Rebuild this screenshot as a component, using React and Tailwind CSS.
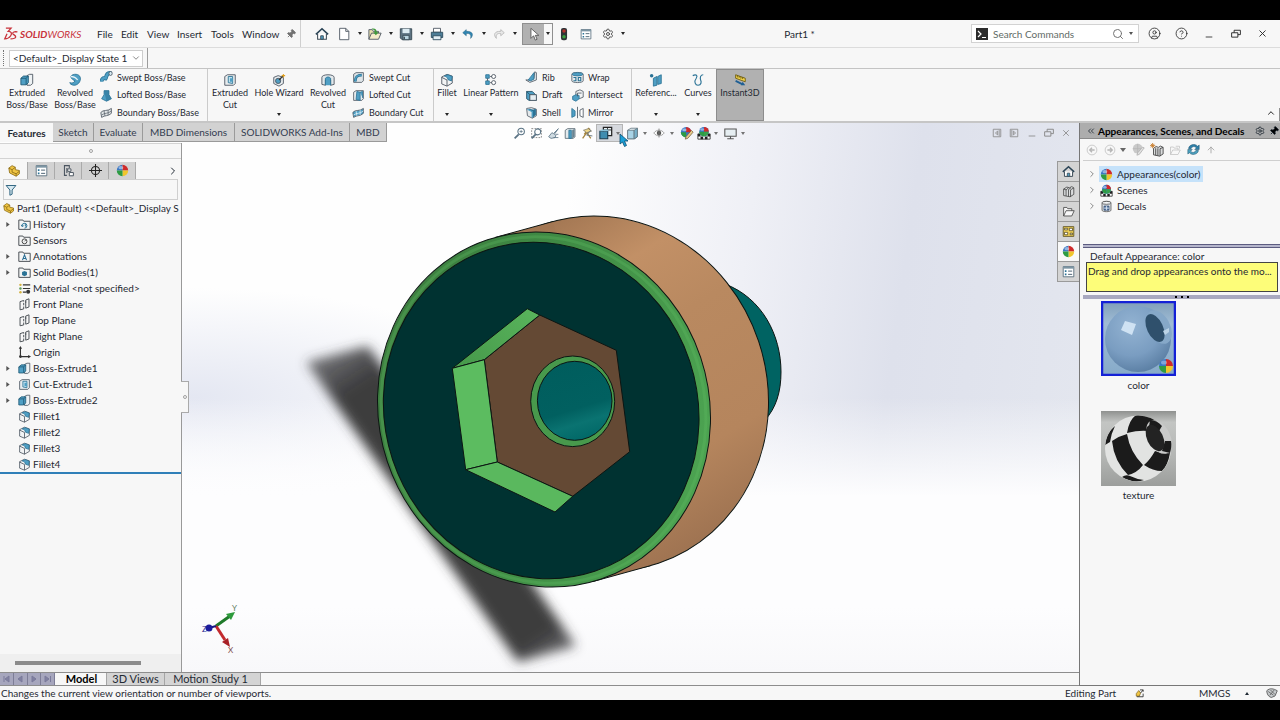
import React from "react";
import { ChevronRight, ChevronUp, ChevronsLeft, ChevronDown, Search, CircleUser, CircleHelp, Settings, Pin, X, Minus, ArrowUp } from "lucide-react";

const L = "#4b5560";
const B = "#4f9fc4";
const D = "#2b7396";

const drawings = {
  extrude: (
    <>
      <path d="M8 3l3-1.500h3.500V12L12 14H8z" fill="#eef2f4" stroke={L} />
      <path d="M1 6l3-2.500h5.500V11L7 13.500H1z" fill={B} stroke="#1d5874" />
      <path d="M1 6h6v7.500M7 6l2.500-2.500" fill="none" stroke="#1d5874" />
    </>
  ),
  revolve: (
    <>
      <path d="M3 4C6 0 13 1 14 5c1 5-3 9-7 9-3 0-5-2-5-3 3 1 5 0 6-2C6 8 4 7 3 4z" fill={B} stroke={D} />
      <path d="M3 4c3 0 6 1 8 4" fill="none" stroke="#e7f3f9" strokeWidth="1.500" />
    </>
  ),
  sweep: (
    <>
      <path d="M2 13c0-3 2-5 5-4 1-1 0-6 5-6.500h2" fill="none" stroke={D} strokeWidth="5" />
      <path d="M2 13c0-3 2-5 5-4 1-1 0-6 5-6.500h2" fill="none" stroke={B} strokeWidth="3" />
      <ellipse cx="13" cy="3" rx="2" ry="2.500" fill="#d7eaf3" stroke={L} />
    </>
  ),
  loft: (
    <>
      <path d="M5 2h6v5l3 5-6 3-6-3 3-5z" fill={B} stroke={D} />
      <path d="M5 2h6v5l3 5-6 3z" fill={D} opacity=".6" />
    </>
  ),
  boundary: (
    <>
      <path d="M1 8c3-4 8-1 13-5v6c-4 4-8 2-12 5z" fill="#dfe3e5" stroke={L} />
      <path d="M2 11c4-3 8-1 12-5M5 6l1 6M10 5v6" fill="none" stroke={L} strokeWidth=".8" />
    </>
  ),
  boundarycut: (
    <>
      <path d="M1 8c3-4 8-1 13-5v6c-4 4-8 2-12 5z" fill={B} stroke={L} />
      <path d="M2 11c4-3 8-1 12-5M5 6l1 6M10 5v6" fill="none" stroke="#e9f4f9" strokeWidth=".9" />
    </>
  ),
  cut: (
    <>
      <path d="M2 4l3-2h9v10l-2 2H2z" fill="#e8ecee" stroke={L} />
      <path d="M6 4h5v8l-5-1z" fill="#bfe0ee" stroke={D} />
      <path d="M8 6h3v4H8z" fill={B} />
    </>
  ),
  hole: (
    <>
      <path d="M2 5l5-2 6 2v7l-5 3-6-3z" fill="#e8ecee" stroke={L} />
      <ellipse cx="7" cy="9" rx="3" ry="3" fill={B} stroke={L} />
      <path d="M8 8l5-5" stroke="#333" strokeWidth="1.500" />
      <path d="M13 1v4M11 3h4" stroke="#e0a020" strokeWidth="1.200" />
    </>
  ),
  revcut: (
    <>
      <path d="M1 5c0-4 14-4 14 0v8l-4 1V8H5v6l-4-1z" fill="#e2e8eb" stroke={L} />
      <path d="M5 14V6c2-2 4-2 6 0v8" fill={B} stroke={D} />
    </>
  ),
  sweepcut: (
    <>
      <path d="M2 4l3-2h9v10l-2 2H2z" fill="#dfe5e8" stroke={L} />
      <path d="M4 13c0-6 2-8 8-8" fill="none" stroke={D} strokeWidth="3.500" />
      <path d="M4 13c0-6 2-8 8-8" fill="none" stroke={B} strokeWidth="1.500" />
    </>
  ),
  loftcut: (
    <>
      <path d="M2 4l3-2h9v10l-2 2H2z" fill="#e8ecee" stroke={L} />
      <path d="M6 3l-1 10 5 1V4zM10 4l3-1v8" fill={B} stroke={D} />
    </>
  ),
  fillet: (
    <>
      <path d="M2 4.500L8 1.500l6 2v8L8 15l-6-2.500z" fill="#f2f4f5" stroke={L} />
      <path d="M5 3.500l4-1.500 5 2-1 5-4-1.500C9 5 7 4 5 3.500z" fill={B} stroke={D} />
      <path d="M8 8v7M2 5l6 3" stroke={L} fill="none" />
    </>
  ),
  pattern: (
    <>
      <path d="M2 2h4v4H2zM2 9h4v4H2z" fill={B} stroke={D} />
      <circle cx="11" cy="4" r="2.300" fill="#fff" stroke={L} />
      <circle cx="11" cy="11" r="2.300" fill="#fff" stroke={L} />
      <path d="M4 6v3M7 4h2M7 11h2" stroke={L} />
    </>
  ),
  rib: (
    <>
      <path d="M1 11l5 3 8-3V2l-2-1-1 8-5 2z" fill="#e5e9eb" stroke={L} />
      <path d="M4 11L11 2v8l-4 2z" fill={B} stroke={D} />
    </>
  ),
  draft: (
    <>
      <path d="M2 3h7l5 5v6H5l-3-2z" fill={B} stroke="#1d4a60" />
      <path d="M2 3l4 4h8M6 7v7" fill="none" stroke="#1d4a60" />
      <path d="M6 7h8v7H6z" fill="#e6eef2" stroke={L} />
    </>
  ),
  shell: (
    <>
      <path d="M2 3l6-1 6 2v8l-5 3-6-3z" fill="#e5e9eb" stroke={L} />
      <path d="M5 4l5 1 3-1v7l-4 3V7z" fill={D} stroke={D} />
      <path d="M3 4l6 3v7" fill="none" stroke={B} strokeWidth="1.500" />
    </>
  ),
  wrap: (
    <>
      <path d="M1 4c0-3 14-3 14 0v8c0 3-14 3-14 0z" fill="#e5e9eb" stroke={L} />
      <ellipse cx="8" cy="4" rx="6.500" ry="2" fill={B} stroke={D} />
      <path d="M3 8h3v4H3M9 8h3v4H9z" fill="none" stroke={D} strokeWidth="1.400" />
    </>
  ),
  intersect: (
    <>
      <path d="M6 3l5-2 4 2v7l-5 2-4-2z" fill="#f1f3f4" stroke={L} />
      <path d="M2 9l4-2 4 1v4l-4 3-4-2z" fill={B} stroke={D} />
      <path d="M8 5h5M8 5v4" stroke={L} fill="none" />
    </>
  ),
  mirror: (
    <>
      <path d="M1 3l4 3v6l-4 2z" fill={B} stroke={D} />
      <path d="M15 3l-4 2v7l4 2z" fill="#fff" stroke={L} />
      <path d="M8 1v14" stroke={L} />
    </>
  ),
  reference: (
    <>
      <circle cx="3" cy="3" r="2" fill={D} />
      <path d="M5 6l4-2v10l-4 1zM10 4l4-2v10l-4 1z" fill={B} stroke={D} />
    </>
  ),
  curves: <path d="M2 3c4-2 6 0 4 3-3 4-1 8 2 8 4 0 4-4 3-6-1-3 0-6 3-6" fill="none" stroke={D} strokeWidth="1.300" />,
  instant: (
    <>
      <path d="M3 2l11 4v4L3 6z" fill="#f3d44a" stroke="#6b5a10" />
      <path d="M5 3v2M7 3.500v2M9 4.500v2M11 5v2" stroke="#4a3d08" strokeWidth=".8" />
      <path d="M3 9l8 4" stroke="#1f5f94" strokeWidth="2" />
      <path d="M14 14l-5 0 2-4z" fill="#1f5f94" />
    </>
  ),
  home: (
    <>
      <path d="M3 8v6h10V8" fill="#fff" stroke="#3c4a55" strokeWidth="1.200" />
      <path d="M1 8.500L8 2l7 6.500" fill="none" stroke="#2b4456" strokeWidth="1.800" />
      <path d="M6.500 14v-4h3v4z" fill={B} stroke="#3c4a55" />
    </>
  ),
  doc: <path d="M3 1.500h7l3.500 3.500v9.500H3zM10 1.500V5h3.500" fill="#fff" stroke={L} />,
  open: (
    <>
      <path d="M1 14V3h4l1 2h6v2" fill="#e9dfb0" stroke={L} />
      <path d="M1 14l3-7h11l-3 7z" fill="#f4eccb" stroke={L} />
      <path d="M4 2c4-1 6 1 6 4h2L9 9.500 6 6h2c0-2-1-3-4-4z" fill="#3f9a3a" />
    </>
  ),
  save: (
    <>
      <path d="M1.500 2h13v12.500h-11l-2-2z" fill="#5d7382" stroke="#344650" />
      <path d="M4 2h8v5H4z" fill="#dcebf2" />
      <path d="M4.500 9.500h7v5h-7z" fill="#b8d4e0" stroke="#344650" />
      <path d="M6 11v3" stroke="#344650" strokeWidth="1.500" />
    </>
  ),
  print: (
    <>
      <path d="M4 1.500h8V6H4z" fill="#fff" stroke={L} />
      <path d="M1.500 6h13v6h-13z" fill="#4c7d97" stroke="#2a4a5b" />
      <path d="M3.500 10h9v4.500h-9z" fill="#e2eff5" stroke="#2a4a5b" />
    </>
  ),
  undo: <path d="M6 3L2 6.500 6 10V7.500c4-.5 6 1 5 5.500 4-4 2-8.500-5-8z" fill="#2f86b3" stroke="#235f80" strokeWidth=".6" />,
  redo: <path d="M10 3l4 3.500L10 10V7.500c-4-.5-6 1-5 5.500-4-4-2-8.500 5-8z" fill="#e8e8e8" stroke="#b9b9b9" />,
  cursor: <path d="M4.500 1.500v11.500l3-3 2 5 2-1-2-4.500h4z" fill="#fff" stroke="#555" />,
  traffic: (
    <>
      <rect x="4.500" y="1" width="7" height="14" rx="2.500" fill="#2e3336" />
      <circle cx="8" cy="4.500" r="2" fill="#b3302b" />
      <circle cx="8" cy="11" r="2" fill="#3aa03c" />
    </>
  ),
  list: (
    <>
      <path d="M1.500 2h13v12.500h-13z" fill="#fff" stroke="#4a6272" />
      <path d="M1.500 2h13v2.500h-13z" fill="#7c95a3" />
      <path d="M3.500 6.500h2v2h-2zM3.500 10.500h2v2h-2z" fill={D} />
      <path d="M7.500 7.500h5M7.500 11.500h5" stroke="#4a6272" strokeWidth="1.200" />
    </>
  ),
  zoomfit: (
    <>
      <circle cx="10" cy="5.500" r="4" fill="#fff" stroke="#5a7384" strokeWidth="1.300" />
      <path d="M7 9l-5 5" stroke="#5a7384" strokeWidth="2.200" />
      <path d="M8 5.500h4M10 3.500v4" stroke="#5a7384" strokeWidth=".9" />
    </>
  ),
  zoomarea: (
    <>
      <path d="M2 2h12v11H2z" fill="none" stroke="#777" strokeDasharray="2 1.500" />
      <circle cx="9.500" cy="6" r="3.700" fill="#fff" stroke="#5a7384" strokeWidth="1.300" />
      <path d="M7 9l-5 5" stroke="#5a7384" strokeWidth="2.200" />
    </>
  ),
  prev: (
    <>
      <path d="M14 2L8 8l-2-1-4 5 3 2 5-1 1-3-2-1z" fill="#cfdbe2" stroke="#5a7384" />
      <path d="M8 13h6M11 9h3" stroke="#5a7384" />
    </>
  ),
  section: (
    <>
      <path d="M1.500 4l3-2h9v10l-2 2h-10z" fill="#e4eaed" stroke="#55656f" />
      <path d="M6 4h3v10H6z" fill={B} stroke={D} />
      <path d="M10 4l3-2v10l-3 2z" fill="#6a8492" />
    </>
  ),
  annot: (
    <>
      <path d="M10 1L4 9M7 7l-5 7M11 2l-3 6 4 6" fill="none" stroke="#a5843f" strokeWidth="1.600" />
      <path d="M3 4l6-2 4 3-6 2z" fill="#eed68a" stroke="#6d6a5c" strokeWidth=".8" />
      <path d="M12 4l-5 6 7 1" fill="none" stroke="#6d7a84" strokeWidth="1.200" />
    </>
  ),
  orient: (
    <>
      <path d="M5 1.500h9.500V11H5z" fill="#eaf2f5" stroke="#222" strokeWidth="1.400" />
      <path d="M9.700 1.500V11M5 4.500h9.500" stroke="#222" />
      <path d="M1 6h9v8.500H1z" fill="#3f8db0" stroke="#173c50" strokeWidth="1.200" />
      <path d="M1 6l2-2h8l-1 2z" fill="#8cc3da" />
    </>
  ),
  cube: (
    <>
      <path d="M2 4l4-2.500h8V12l-3 2.500H2z" fill="#eaf4f8" stroke="#63757f" />
      <path d="M2 4h8v10.500H2z" fill="#a8d3e6" stroke="#63757f" />
      <path d="M10 4l4-2.500V12l-4 2.500z" fill="#76b0c9" stroke="#63757f" />
    </>
  ),
  eye: (
    <>
      <path d="M1 8c4-5 10-5 14 0-4 5-10 5-14 0z" fill="#fff" stroke="#888" />
      <circle cx="8" cy="8" r="3" fill="#555" />
      <path d="M8 2v12" stroke="#777" />
    </>
  ),
  ball: (
    <>
      <path d="M8 8V1a7 7 0 0 0-7 7z" fill="#3976c4" />
      <path d="M8 8V1a7 7 0 0 1 7 7z" fill="#cf2b2b" />
      <path d="M8 8h7a7 7 0 0 1-7 7z" fill="#f0c62c" />
      <path d="M8 8v7a7 7 0 0 1-7-7z" fill="#2e9c43" />
      <ellipse cx="6" cy="4.500" rx="3" ry="2" fill="#fff" opacity=".45" />
    </>
  ),
  ballpen: (
    <>
      <circle cx="7" cy="7" r="6" fill="#3976c4" />
      <path d="M7 7V1a6 6 0 0 1 6 6z" fill="#cf2b2b" />
      <path d="M7 7v6a6 6 0 0 1-6-6z" fill="#2e9c43" />
      <path d="M15 7l-6 7-3 1 1-3 6-7z" fill="#e8c98a" stroke="#6d5a3a" strokeWidth=".8" />
      <ellipse cx="5" cy="4.500" rx="2.500" ry="1.600" fill="#fff" opacity=".5" />
    </>
  ),
  scene: (
    <>
      <path d="M1 9h14v6H1z" fill="#fff" stroke="#333" />
      <path d="M1 9h3v3H1zM12 9h3v3h-3zM4 12h3v3H4zM9 12h3v3H9z" fill="#222" />
      <circle cx="8" cy="6.500" r="5.500" fill="#3976c4" />
      <path d="M8 6.500V1a5.500 5.500 0 0 1 5.500 5.500z" fill="#cf2b2b" />
      <path d="M8 6.500V12a5.500 5.500 0 0 1-5.500-5.500z" fill="#2e9c43" />
      <path d="M8 6.500h5.500A5.500 5.500 0 0 1 8 12z" fill="#37a24c" />
      <ellipse cx="6" cy="4" rx="2.200" ry="1.500" fill="#fff" opacity=".45" />
    </>
  ),
  monitor: (
    <>
      <path d="M1 2.500h14v9H1z" fill="#e6eef2" stroke="#555" strokeWidth="1.300" />
      <path d="M8 11.500V14M4 14.500h8" stroke="#555" strokeWidth="1.300" />
    </>
  ),
  part: (
    <>
      <path d="M1 5l4-3 4 2v3l5 1v4l-4 3-8-4z" fill="#f0c544" stroke="#8a6a12" />
      <path d="M1 5l4 2v3l5 2v3M5 7l4-3M10 12l4-3" fill="none" stroke="#8a6a12" />
    </>
  ),
  tree: (
    <>
      <path d="M3 14V2h6v3M3 2v12h3M6 5v6" fill="none" stroke={L} strokeWidth="1.300" />
      <path d="M7 6h4v3H7zM9 10.500h5v4H9z" fill="#fff" stroke={L} strokeWidth="1.200" />
    </>
  ),
  target: (
    <>
      <circle cx="8" cy="8" r="5" fill="none" stroke="#222" strokeWidth="1.300" />
      <path d="M8 0v16M0 8h16" stroke="#222" strokeWidth="1.300" />
    </>
  ),
  funnel: <path d="M1.500 2h13L9.500 8v5.500L6.500 15V8z" fill="#d6e8f0" stroke="#2f6480" strokeWidth="1.300" />,
  history: (
    <>
      <path d="M1 14V2.500h5l1 1.500h8v10z" fill="#f4f5f5" stroke="#4a4f54" strokeWidth="1.200" />
      <path d="M5 10a3 3 0 1 1 3 2.500M4 8.500l1 2 2-1M9 7.500V10h1.500" fill="none" stroke={D} strokeWidth="1.200" />
    </>
  ),
  sensors: (
    <>
      <path d="M1 14V2.500h5l1 1.500h8v10z" fill="#f4f5f5" stroke="#4a4f54" strokeWidth="1.200" />
      <circle cx="8" cy="9" r="3" fill="none" stroke="#444" strokeWidth="1.200" />
      <path d="M8 9l2-2" stroke="#444" />
    </>
  ),
  annotations: (
    <>
      <path d="M1 14V2.500h5l1 1.500h8v10z" fill="#f4f5f5" stroke="#4a4f54" strokeWidth="1.200" />
      <path d="M5.500 12.500L8 6l2.500 6.500M6.500 10.500h3" fill="none" stroke="#286d94" strokeWidth="1.300" />
    </>
  ),
  bodies: (
    <>
      <path d="M1 14V2.500h5l1 1.500h8v10z" fill="#f4f5f5" stroke="#4a4f54" strokeWidth="1.200" />
      <path d="M5 7.500l3-1.500 3 1.500v3.500l-3 1.500-3-1.500z" fill={D} />
    </>
  ),
  material: (
    <>
      <circle cx="3" cy="3.500" r="1.500" fill="#d3b13d" />
      <circle cx="3" cy="8" r="1.500" fill="#5e9a5b" />
      <circle cx="3" cy="12.500" r="1.500" fill="#d3b13d" />
      <path d="M6 3.500h9M6 8h9M6 12.500h4" stroke="#333" strokeWidth="1.400" />
      <circle cx="12.500" cy="12" r="2.500" fill="#333" />
    </>
  ),
  plane: <path d="M2.500 4.500L7 3M7 13.500l-4.500 1v-10M7 3v1.500M7 6v3M7 10.500v3M9.500 2.500l4-1.500v10l-4 1.500zM9.500 4v2" fill="none" stroke="#4c5257" strokeWidth="1.200" />,
  origin: (
    <>
      <path d="M3 1.500V13h11" fill="none" stroke="#333" strokeWidth="1.400" />
      <path d="M3 0l2 3.500H1zM16 13l-3.500 2v-4z" fill="#333" />
      <circle cx="3" cy="13" r="1.700" fill="#333" />
    </>
  ),
  back: (
    <>
      <circle cx="8" cy="8" r="6.500" fill="none" stroke="#bdbdbd" />
      <path d="M11.500 8h-6M8 5L5 8l3 3" fill="none" stroke="#b5b5b5" strokeWidth="1.800" />
    </>
  ),
  forward: (
    <>
      <circle cx="8" cy="8" r="6.500" fill="none" stroke="#bdbdbd" />
      <path d="M4.500 8h6M8 5l3 3-3 3" fill="none" stroke="#b5b5b5" strokeWidth="1.800" />
    </>
  ),
  grayball: (
    <>
      <circle cx="7" cy="7" r="6" fill="#c9c9c9" />
      <path d="M7 1v12M1 7h12" stroke="#b5b5b5" />
      <path d="M15 6l-6 8-3 1 1-3 6-7z" fill="#e2e2e2" stroke="#b0b0b0" />
    </>
  ),
  books: (
    <>
      <path d="M2 5l4-2.500 3 1 3-1.500 2.500 1.500v8L10 14.500 2 13z" fill="#dadcdd" stroke="#444" />
      <path d="M2 5l3 1v7.500M5 6l3-2.500M8 5.500V14M8 5.500l3-2M10.500 6v8.500M10.500 6l4-2.500" fill="none" stroke="#444" />
    </>
  ),
  addbooks: (
    <>
      <path d="M4 6l3-2 2.500 1L12 3.500 15 5v7.500L11 15l-7-1.500z" fill="#dadcdd" stroke="#444" />
      <path d="M6.500 6v8M9 6v8.500M11.500 6.500V15M11.500 6.500L15 5" fill="none" stroke="#444" />
      <path d="M3 0v6M0 3h6M1 1l4 4M5 1L1 5" stroke="#c77b2a" />
    </>
  ),
  grayfolder: <path d="M2 14V4h4l1 1.500h5V8M2 14l3-6h10l-3 6zM9 3h5v3" fill="none" stroke="#c0c0c0" />,
  refresh: (
    <>
      <path d="M2 7c0-5 8-7 11-3l2-1.500V8H9.500l2-2C9 3.500 6.500 4 5 7z" fill="#2d7fa8" stroke="#174e6b" strokeWidth=".6" />
      <path d="M14 9c0 5-8 7-11 3l-2 1.500V8h5.500l-2 2C7 12.500 9.500 12 11 9z" fill="#4b9fbd" stroke="#174e6b" strokeWidth=".6" />
    </>
  ),
  decal: (
    <>
      <path d="M2.500 3.500c0-2.500 11-2.500 11 0v9c0 2.500-11 2.500-11 0z" fill="#dde3e8" stroke="#555" />
      <ellipse cx="8" cy="3.500" rx="5.500" ry="1.800" fill="#f6f8f9" stroke="#555" />
      <path d="M5 7.500h6v5H5z" fill="#5f83ad" stroke="#31486b" />
      <path d="M5 10h6M8 7.500v5" stroke="#dfe9f5" />
    </>
  ),
  openfolder: <path d="M2 13.500V3h4l1 1.500h5V7M2 13.500L5 7h10l-3 6.500z" fill="#f7f7f7" stroke="#444" />,
  palette: (
    <>
      <path d="M1.500 2h13v12h-13z" fill="#f1d259" stroke="#554a1c" />
      <path d="M3 6h4V4H3zM9 4h4v3H9zM3 9h4v3H3zM10 10h3v2h-3z" fill="#fff" stroke="#554a1c" />
    </>
  ),
  edit: (
    <>
      <path d="M2 9l4-5 3 4-2 5H2z" fill="#f0c544" stroke="#6b5210" />
      <path d="M8 3h5v3M13 3L9 8M3 14h10V9" stroke="#333" fill="none" strokeWidth="1.400" />
    </>
  ),
  tag: (
    <>
      <path d="M1 5c4-4 9-3 14 0l-3 7-5 2C3 13 1 9 1 5z" fill="#c6cacc" stroke="#444" />
      <path d="M3 6l7 5M6 4l6 6M5 11l6-7" stroke="#555" />
    </>
  ),
  dockleft: <path d="M2 2h12v12H2zM9 5L5.500 8 9 11zM11.500 3v10" fill="none" stroke="#888" strokeWidth="1.300" />,
  dockright: <path d="M2 2h12v12H2zM7 5l3.500 3L7 11zM4.500 3v10" fill="none" stroke="#888" strokeWidth="1.300" />,
  restore: <path d="M5 6V2h10v7h-4M1 6h10v7H1z" fill="none" stroke="currentColor" strokeWidth="1.500" />,
};

const Icon = ({ name, className = "size-3.5" }) => (
  <svg viewBox="0 0 16 16" className={`shrink-0 ${className}`} aria-hidden="true">
    {drawings[name]}
  </svg>
);

const Caret = ({ className = "text-neutral-800" }) => (
  <svg viewBox="0 0 4 3" className={`h-[3px] w-1 shrink-0 ${className}`} aria-hidden="true">
    <path d="M0 0h4L2 3z" fill="currentColor" />
  </svg>
);

const IconButton = ({ label, className = "", children }) => (
  <button type="button" aria-label={label} className={`flex shrink-0 items-center justify-center ${className}`}>
    {children}
  </button>
);

function Logo() {
  return (
    <div className="flex w-[94px] items-center gap-0.5 pl-[3px] text-[#c8323a]">
      <svg viewBox="0 0 26 24" className="h-3.5 w-[15px] shrink-0" aria-hidden="true">
        <path d="M5 2h9l-5 5.500c6 0 7 4 4 8-2 3-6 5-10 5l4-9M25 8.500c-5-1-9 0-8 3 1 2 6 3 5 6-1 3-5 3-9 3" fill="none" stroke="#c8323a" strokeWidth="2.200" />
      </svg>
      <span className="text-[10px] italic leading-3"><b>SOLID</b>WORKS</span>
    </div>
  );
}

const menus = [["File", "w-[24px]"], ["Edit", "w-[26px]"], ["View", "w-[30px]"], ["Insert", "w-[34px]"], ["Tools", "w-[31px]"], ["Window", "w-[42px]"]];
const quick = [["New", "doc"], ["Open", "open"], ["Save", "save"], ["Print", "print"], ["Undo", "undo"], ["Redo", "redo"]];

function TitleBar() {
  return (
    <header className="flex h-7 shrink-0 items-center border-b border-[#dcdcdc]">
      <Logo />
      <nav className="flex items-center pl-[3px]">
        {menus.map(([m, w]) => (
          <button type="button" key={m} className={`${w} text-left`}>{m}</button>
        ))}
      </nav>
      <IconButton label="Pin menu" className="w-[14px]"><Pin className="size-2.5 rotate-45 fill-neutral-500 text-neutral-500" /></IconButton>
      <div className="ml-[2px] h-full w-px bg-[#cfcfcf]" />
      <IconButton label="Home" className="ml-[14px] mr-[7px]"><Icon name="home" className="size-3.5" /></IconButton>
      {quick.map(([label, icon]) => (
        <div key={label} className="flex">
          <IconButton label={label} className="w-4"><Icon name={icon} className="size-3.5" /></IconButton>
          <IconButton label={`${label} options`} className="w-[15px]"><Caret /></IconButton>
        </div>
      ))}
      <div className="flex h-[22px] border border-[#8f8f8f]">
        <IconButton label="Select" className="w-[21px] bg-[#b1b1b1]"><Icon name="cursor" className="size-3.5" /></IconButton>
        <IconButton label="Select options" className="w-[8px]"><Caret /></IconButton>
      </div>
      <IconButton label="Rebuild" className="w-[22px]"><Icon name="traffic" /></IconButton>
      <IconButton label="File properties" className="w-[22px]"><Icon name="list" className="size-3" /></IconButton>
      <IconButton label="Options" className="w-[21px]"><Settings className="size-3 text-neutral-600" /></IconButton>
      <IconButton label="Options menu" className="w-[10px]"><Caret /></IconButton>
      <h1 className="flex-1 text-center">Part1 *</h1>
      <label className="flex h-[19px] w-[168px] items-center border border-[#d2d2d2] bg-white pl-1">
        <svg viewBox="0 0 12 12" className="size-3 shrink-0" aria-hidden="true">
          <path d="M0 0h12v12H0z" fill="#2b2b2b" />
          <path d="M2 3l3 3-3 3M6 9.500h4" fill="none" stroke="#fff" strokeWidth="1.200" />
        </svg>
        <input aria-label="Search Commands" placeholder="Search Commands" className="w-0 flex-1 bg-transparent pl-[5px] outline-none placeholder:text-[#5f6b66]" />
        <Search className="size-3 text-neutral-500" />
        <span className="flex w-[14px] justify-center"><Caret className="text-neutral-600" /></span>
      </label>
      <div className="flex pl-[2px] pr-1 text-neutral-800">
        <IconButton label="Account" className="w-[27px]"><CircleUser className="size-[13px]" strokeWidth={1.5} /></IconButton>
        <IconButton label="Help" className="w-[27px]"><CircleHelp className="size-[13px]" strokeWidth={1.5} /></IconButton>
        <IconButton label="Minimize" className="w-[27px] pt-1.5"><Minus className="size-2.5" /></IconButton>
        <IconButton label="Restore" className="w-[27px]"><Icon name="restore" className="size-2.5" /></IconButton>
        <IconButton label="Close" className="w-[27px]"><X className="size-[11px]" /></IconButton>
      </div>
    </header>
  );
}

function DisplayState() {
  return (
    <div className="flex h-[21px] shrink-0 items-center border-b border-[#c4c4c4]">
      <div className="flex h-full w-[148px] items-center border-r border-[#9c9c9c] pl-[3px]">
        <div className="h-4 border-l border-dotted border-neutral-500" />
        <div className="relative ml-[5px] flex w-[134px] items-center">
          <select aria-label="Display state" className="h-[17px] w-full appearance-none border border-[#cdcdcd] bg-white pl-[3px]">
            <option>&lt;Default&gt;_Display State 1</option>
          </select>
          <ChevronDown className="pointer-events-none absolute right-0.5 size-2.5 text-neutral-500" />
        </div>
      </div>
    </div>
  );
}

const Big = ({ lines, icon, width, caret, active }) => (
  <button type="button" className={`flex h-full flex-col items-center whitespace-nowrap ${width} ${active ? "border border-[#8d8d8d] bg-[#b1b1b1] pt-[3px]" : "pt-1"}`}>
    <Icon name={icon} />
    {lines.map((t) => (
      <span key={t} className="h-3">{t}</span>
    ))}
    {caret && <span className="pt-3.5"><Caret /></span>}
  </button>
);

const Stack = ({ items, width }) => (
  <div className={`flex h-full flex-col justify-between ${width}`}>
    {items.map(([label, icon]) => (
      <button type="button" key={label} className="flex h-[17px] items-center gap-1 whitespace-nowrap">
        <Icon name={icon} className="size-[13px]" />
        {label}
      </button>
    ))}
  </div>
);

const Rule = () => <div className="h-full w-px bg-[#cbcbcb]" />;

function Ribbon() {
  return (
    <div className="flex h-[54px] shrink-0 border-b-2 border-[#c6c6c6] pl-[3px] text-[9px]">
      <Big lines={["Extruded", "Boss/Base"]} icon="extrude" width="w-12" />
      <Big lines={["Revolved", "Boss/Base"]} icon="revolve" width="w-12" />
      <Stack width="w-[108px] pl-px" items={[["Swept Boss/Base", "sweep"], ["Lofted Boss/Base", "loft"], ["Boundary Boss/Base", "boundary"]]} />
      <Rule />
      <Big lines={["Extruded", "Cut"]} icon="cut" width="w-11" />
      <Big lines={["Hole Wizard"]} icon="hole" width="w-[54px]" caret />
      <Big lines={["Revolved", "Cut"]} icon="revcut" width="w-11" />
      <Stack width="w-[83px] pl-[2px]" items={[["Swept Cut", "sweepcut"], ["Lofted Cut", "loftcut"], ["Boundary Cut", "boundarycut"]]} />
      <Rule />
      <Big lines={["Fillet"]} icon="fillet" width="w-[26px]" caret />
      <Big lines={["Linear Pattern"]} icon="pattern" width="w-[62px]" caret />
      <Stack width="w-[46px] pl-[3px]" items={[["Rib", "rib"], ["Draft", "draft"], ["Shell", "shell"]]} />
      <Stack width="w-[63px] pl-[3px]" items={[["Wrap", "wrap"], ["Intersect", "intersect"], ["Mirror", "mirror"]]} />
      <Rule />
      <Big lines={["Referenc..."]} icon="reference" width="w-12" caret />
      <Big lines={["Curves"]} icon="curves" width="w-9" caret />
      <Big lines={["Instant3D"]} icon="instant" width="w-12" active />
      <IconButton label="Collapse ribbon" className="ml-auto w-[18px] self-end border-r border-[#8f8f8f] pb-[3px]"><ChevronUp className="size-2.5 text-black" /></IconButton>
    </div>
  );
}

const tabs = [["Sketch", "w-[41px]"], ["Evaluate", "w-[49px]"], ["MBD Dimensions", "w-[92px]"], ["SOLIDWORKS Add-Ins", "w-[115px]"], ["MBD", "w-[37px]"]];

function CommandTabs() {
  return (
    <div className="flex h-[19px]">
      <button type="button" className="w-[53px] bg-[#f7f7f7] font-bold">Features</button>
      {tabs.map(([t, w]) => (
        <button type="button" key={t} className={`border-b border-r border-[#9a9a9a] bg-[#d2d2d2] text-[#333c50] ${w} whitespace-nowrap`}>{t}</button>
      ))}
    </div>
  );
}

function ViewToolbar() {
  return (
    <div className="ml-[124px] flex h-5 items-center">
      {["zoomfit", "zoomarea", "prev", "section", "annot"].map((n) => (
        <IconButton key={n} label={n} className="w-[17px]"><Icon name={n} className="size-[13px]" /></IconButton>
      ))}
      <div className="relative flex h-[18px] border border-[#b5b5b5] bg-[#d6d9de]">
        <IconButton label="View orientation" className="w-[17px]"><Icon name="orient" /></IconButton>
        <IconButton label="View orientation options" className="w-[8px]"><Caret className="text-neutral-500" /></IconButton>
        <svg viewBox="0 0 10 14" className="absolute left-[22px] top-[8px] z-10 h-[14px] w-[10px]" aria-hidden="true">
          <path d="M1 1v10l2.500-2 2 4.500 2-1-2-4.500H9z" fill="#1ba0d8" stroke="#0d4d70" strokeWidth=".8" />
        </svg>
      </div>
      <IconButton label="Display style" className="w-[19px]"><Icon name="cube" className="size-[13px]" /></IconButton>
      <span className="flex w-[5px] justify-center"><Caret className="text-neutral-500" /></span>
      <IconButton label="Hide or show items" className="w-[23px]"><Icon name="eye" className="size-3" /></IconButton>
      <span className="flex w-[4px] justify-center"><Caret className="text-neutral-500" /></span>
      <IconButton label="Edit appearance" className="ml-1 w-[17px]"><Icon name="ballpen" /></IconButton>
      <IconButton label="Apply scene" className="w-[17px]"><Icon name="scene" /></IconButton>
      <span className="flex w-[8px] justify-center"><Caret className="text-neutral-500" /></span>
      <IconButton label="View settings" className="w-5"><Icon name="monitor" className="size-[13px]" /></IconButton>
      <span className="flex w-[5px] justify-center"><Caret className="text-neutral-500" /></span>
    </div>
  );
}

function DocumentControls() {
  return (
    <div className="ml-auto flex h-5 items-center pr-[5px] text-[#888]">
      <IconButton label="Dock left" className="w-[17px]"><Icon name="dockleft" className="size-2.5" /></IconButton>
      <IconButton label="Dock right" className="w-[18px]"><Icon name="dockright" className="size-2.5" /></IconButton>
      <IconButton label="Minimize document" className="w-[17px] pt-1.5"><Minus className="size-2.5" /></IconButton>
      <IconButton label="Restore document" className="w-[18px]"><Icon name="restore" className="size-2.5" /></IconButton>
      <IconButton label="Close document" className="w-[16px]"><X className="size-2.5" /></IconButton>
    </div>
  );
}

const treeItems = [
  ["History", "history", true], ["Sensors", "sensors"], ["Annotations", "annotations", true], ["Solid Bodies(1)", "bodies", true],
  ["Material <not specified>", "material"], ["Front Plane", "plane"], ["Top Plane", "plane"], ["Right Plane", "plane"], ["Origin", "origin"],
  ["Boss-Extrude1", "extrude", true], ["Cut-Extrude1", "cut", true], ["Boss-Extrude2", "extrude", true],
  ["Fillet1", "fillet"], ["Fillet2", "fillet"], ["Fillet3", "fillet"], ["Fillet4", "fillet"],
];

function FeatureTree() {
  return (
    <aside className="relative flex w-[182px] shrink-0 flex-col border-r border-[#999] bg-[#f7f7f7]">
      <div className="flex h-4 items-center justify-center border-b border-t border-[#d3d3d3]">
        <span className="size-1 rounded-full border border-neutral-400" />
      </div>
      <div className="mt-[3px] flex h-[17px] pl-px">
        {["part", "list", "tree", "target", "ball"].map((n, i) => (
          <IconButton key={n} label={n} className={`w-[27px] border-r border-[#aaa] ${i === 0 ? "" : "bg-[#d2d2d2]"}`}><Icon name={n} className="size-[13px]" /></IconButton>
        ))}
        <IconButton label="More tabs" className="ml-auto w-4"><ChevronRight className="size-3" /></IconButton>
      </div>
      <label className="mx-[3px] flex h-[21px] items-center border border-[#cfcfcf] pl-px">
        <Icon name="funnel" className="size-3" />
        <input aria-label="Filter tree" className="w-0 flex-1 bg-transparent outline-none" />
      </label>
      <ul className="overflow-hidden whitespace-nowrap">
        <li className="flex h-4 items-center gap-[2px] pl-[3px]"><Icon name="part" className="size-3" />Part1 (Default) &lt;&lt;Default&gt;_Display S</li>
        {treeItems.map(([label, icon, open]) => (
          <li key={label} className="flex h-4 items-center">
            <span className="flex w-[18px] shrink-0 pl-[6px]">
              {open && <svg viewBox="0 0 4 6" className="h-[5px] w-[4px]" aria-hidden="true"><path d="M0 0l4 3-4 3z" fill="#555" /></svg>}
            </span>
            <Icon name={icon} className="size-[13px]" />
            <span className="pl-0.5">{label}</span>
          </li>
        ))}
      </ul>
      <div className="h-[2px] bg-[#2f7fb8]" />
      <div className="mt-auto flex h-[18px] items-center bg-[#efefef] pl-[15px]">
        <div className="h-1 w-[126px] bg-[#8b8b8b]" />
      </div>
      <button type="button" aria-label="Collapse tree" className="absolute -right-[8px] top-[238px] z-10 flex h-8 w-[8px] items-center justify-center border border-l-0 border-[#aaa] bg-[#f7f7f7]">
        <span className="size-1 rounded-full border border-neutral-400" />
      </button>
    </aside>
  );
}

function Model() {
  return (
    <svg viewBox="182 143 897 529" className="absolute inset-0 size-full" role="img" aria-label="Part model">
      <defs>
        <filter id="soft" x="-20%" y="-20%" width="140%" height="140%"><feGaussianBlur stdDeviation="6" /></filter>
        <linearGradient id="shade" x1="340" y1="345" x2="545" y2="655" gradientUnits="userSpaceOnUse">
          <stop offset="0" stopColor="#3c3c3e" stopOpacity=".7" />
          <stop offset=".12" stopColor="#3c3c3e" />
          <stop offset=".95" stopColor="#3c3c3e" />
          <stop offset="1" stopColor="#3c3c3e" stopOpacity=".8" />
        </linearGradient>
        <linearGradient id="side" x1="600" y1="216" x2="680" y2="570" gradientUnits="userSpaceOnUse">
          <stop offset="0" stopColor="#a37753" />
          <stop offset=".2" stopColor="#c29066" />
          <stop offset=".4" stopColor="#b98960" />
          <stop offset=".75" stopColor="#b5855d" />
          <stop offset="1" stopColor="#9c7150" />
        </linearGradient>
        <linearGradient id="rim" x1="400" y1="300" x2="700" y2="480" gradientUnits="userSpaceOnUse">
          <stop offset="0" stopColor="#3c7c3f" />
          <stop offset=".45" stopColor="#3f8a44" />
          <stop offset="1" stopColor="#4ca351" />
        </linearGradient>
        <linearGradient id="bore" x1="560" y1="361" x2="585" y2="441" gradientUnits="userSpaceOnUse">
          <stop offset="0" stopColor="#005d5d" />
          <stop offset=".6" stopColor="#016060" />
          <stop offset=".78" stopColor="#0a7371" />
          <stop offset="1" stopColor="#006766" />
        </linearGradient>
        <linearGradient id="wall" x1="530" y1="310" x2="470" y2="365" gradientUnits="userSpaceOnUse">
          <stop offset="0" stopColor="#58b35b" />
          <stop offset="1" stopColor="#489b4c" />
        </linearGradient>
      </defs>
      <path d="M306 362l62-16 208 300-58 16z" fill="url(#shade)" filter="url(#soft)" />
      <g stroke="#0c1512" strokeWidth="1">
        <path d="M725 284C762 298 781 335 781 372c0 20-5 36-16 48z" fill="#006362" />
        <ellipse cx="602" cy="393.500" rx="165.100" ry="178.800" transform="rotate(-18.400 602 393.500)" fill="url(#side)" />
        <path d="M495 237.500L553 221.500 651 565.500 593 581.500z" fill="url(#side)" stroke="none" />
        <path d="M495 237.500L553 221.500M651 565.500L593 581.500" />
        <ellipse cx="544" cy="409.500" rx="165.100" ry="178.800" transform="rotate(-18.400 544 409.500)" fill="url(#rim)" />
        <ellipse cx="543.500" cy="410" rx="161" ry="174.500" transform="rotate(-18.400 543.500 410)" fill="none" stroke="#5fbd63" strokeOpacity=".3" strokeWidth="3" />
        <ellipse cx="541.200" cy="410.500" rx="156.500" ry="169.500" transform="rotate(-18.400 541.200 410.500)" fill="#003231" />
        <path d="M539.700 315L616.300 350.300 629.700 451.700 572.700 496.300 497.300 462 484.300 359.700z" fill="#644934" />
        <path d="M527.300 308.700L539.700 315 484.300 359.700 452.300 368.300z" fill="url(#wall)" />
        <path d="M452.300 368.300L484.300 359.700 497.300 462 465.700 469.700z" fill="#5cbc60" />
        <path d="M465.700 469.700L497.300 462 572.700 496.300 555 512z" fill="#5ab85e" />
        <ellipse cx="572.700" cy="401.300" rx="42" ry="45.300" fill="#48994c" />
        <ellipse cx="574.700" cy="400.800" rx="37.300" ry="39.500" fill="url(#bore)" />
      </g>
      <g fontSize="8" fontFamily="Lato, sans-serif">
        <path d="M216 626l14-10" stroke="#1f7a2a" strokeWidth="3" />
        <path d="M235 612l-4 8-5-6z" fill="#2d9a3b" />
        <path d="M216 626l9 14" stroke="#c32a2e" strokeWidth="3" />
        <path d="M230 647l-8-5 6-4z" fill="#a82026" />
        <path d="M209 628l7-2" stroke="#17177e" strokeWidth="2" />
        <circle cx="209" cy="628" r="3.500" fill="#1b1b9c" />
        <text x="232" y="611" fill="#5b7a5b">Y</text>
        <text x="228" y="653" fill="#7d4a4a">X</text>
        <text x="202" y="632" fill="#26268a">Z</text>
      </g>
    </svg>
  );
}

const paneTabs = [["Home", "home"], ["Design library", "books"], ["File explorer", "openfolder"], ["View palette", "palette"], ["Appearances", "ball"], ["Custom properties", "list"]];

function Viewport() {
  return (
    <section className="relative min-w-0 flex-1">
      <Model />
      <div className="absolute right-0 top-[18px] w-[22px] border-l border-t border-[#9a9a9a]">
        {paneTabs.map(([label, n]) => (
          <IconButton key={label} label={label} className={`h-5 w-full border-b border-[#9a9a9a] ${n === "ball" ? "bg-[#f9f9f9]" : "bg-[#d4d4d4]"}`}><Icon name={n} className="size-[13px]" /></IconButton>
        ))}
      </div>
    </section>
  );
}

function ColorSwatch() {
  return (
    <svg viewBox="0 0 75 75" className="size-[75px]" aria-hidden="true">
      <defs>
        <radialGradient id="blueBall" cx=".4" cy=".3" r=".75">
          <stop offset="0" stopColor="#93b3d2" /><stop offset=".6" stopColor="#7a9dc1" /><stop offset="1" stopColor="#587ca1" />
        </radialGradient>
        <linearGradient id="blueFloor" x2="0" y2="1"><stop offset="0" stopColor="#7f9eb8" /><stop offset=".3" stopColor="#a0bcd5" /><stop offset="1" stopColor="#86aac9" /></linearGradient>
      </defs>
      <path d="M0 0h75v75H0z" fill="url(#blueFloor)" />
      <circle cx="37" cy="38" r="33" fill="url(#blueBall)" />
      <ellipse cx="58" cy="26" rx="11" ry="18" transform="rotate(-28 58 26)" fill="#86a8c8" />
      <ellipse cx="54" cy="27" rx="8" ry="15" transform="rotate(-25 54 27)" fill="#2f506c" />
      <path d="M62 30l6-3v4l-4 3z" fill="#bcd3e6" />
      <path d="M24 20l11 3-4 11-11-5z" fill="#cfe2f3" />
      <g transform="translate(57 57)">
        <path d="M8 8V1a7 7 0 0 0-7 7z" fill="#3976c4" /><path d="M8 8V1a7 7 0 0 1 7 7z" fill="#cf2b2b" />
        <path d="M8 8h7a7 7 0 0 1-7 7z" fill="#f0c62c" /><path d="M8 8v7a7 7 0 0 1-7-7z" fill="#2e9c43" />
        <ellipse cx="6" cy="4.500" rx="3" ry="2" fill="#fff" opacity=".35" />
      </g>
      <path d="M1 1h73v73H1z" fill="none" stroke="#1421d6" strokeWidth="2.500" />
    </svg>
  );
}

function TextureSwatch() {
  return (
    <svg viewBox="0 0 75 75" className="size-[75px]" aria-hidden="true">
      <defs>
        <linearGradient id="grayFloor" x2="0" y2="1"><stop offset="0" stopColor="#8f918f" /><stop offset=".15" stopColor="#c3c5c3" /><stop offset=".6" stopColor="#b4b6b4" /><stop offset="1" stopColor="#9c9e9c" /></linearGradient>
        <clipPath id="ballClip"><circle cx="37" cy="37.500" r="33" /></clipPath>
      </defs>
      <path d="M0 0h75v75H0z" fill="url(#grayFloor)" />
      <g clipPath="url(#ballClip)">
        <path d="M0 0h75v75H0z" fill="#e2e3e2" />
        <path d="M26 22Q28 9 35 4q12-1 22 5l-10 11q-9-1-21 2z" fill="#1b1b1b" />
        <path d="M11 30q7-5 15-7 3 18 16 31-6 8-15 10-14-14-16-34z" fill="#1b1b1b" />
        <path d="M43 54q6-5 11-14 8 3 15 2-2 12-8 18-9 0-18-6z" fill="#1b1b1b" />
        <path d="M4 34q1-12 10-19-4 8-5 16zM21 66q4-3 8-1 6 3 14 4-10 4-22-3z" fill="#1b1b1b" />
      </g>
      <ellipse cx="58" cy="26" rx="11" ry="18" transform="rotate(-28 58 26)" fill="#c9cac9" />
      <path d="M49 9q7 0 12 6l-3 5-10-4zM64 30l6 0q1 5-1 12l-8-2z" fill="#1b1b1b" />
      <ellipse cx="54" cy="27" rx="8" ry="14" transform="rotate(-25 54 27)" fill="#232323" />
    </svg>
  );
}

function TaskPane() {
  const nodes = [["Appearances(color)", "ball"], ["Scenes", "scene"], ["Decals", "decal"]];
  return (
    <aside className="flex w-[201px] shrink-0 flex-col border-b border-l border-[#777]">
      <div className="flex h-4 items-center whitespace-nowrap border-b border-[#8a8a8a] bg-[#adadad] pl-1.5">
        <ChevronsLeft className="size-2.5 shrink-0" />
        <h2 className="flex-1 pl-[2px] font-bold text-black">Appearances, Scenes, and Decals</h2>
        <IconButton label="Pane options" className="w-3"><Settings className="size-2.5" /></IconButton>
        <IconButton label="Pin pane" className="ml-0.5 w-3"><Pin className="size-2.5 rotate-45 fill-black" /></IconButton>
      </div>
      <div className="ml-[3px] flex h-[22px] items-center border-b border-[#cfcfcf]">
        <IconButton label="Back" className="w-[18px]"><Icon name="back" className="size-3" /></IconButton>
        <IconButton label="Forward" className="w-[18px]"><Icon name="forward" className="size-3" /></IconButton>
        <IconButton label="History" className="w-2"><svg viewBox="0 0 6 4" className="h-1 w-1.5" aria-hidden="true"><path d="M0 0h6L3 4z" fill="#666" /></svg></IconButton>
        <IconButton label="Edit" className="w-[22px]"><Icon name="grayball" className="size-[13px]" /></IconButton>
        <IconButton label="Add location" className="w-4"><Icon name="addbooks" className="size-3.5" /></IconButton>
        <IconButton label="Open folder" className="w-5"><Icon name="grayfolder" className="size-3" /></IconButton>
        <IconButton label="Refresh" className="w-4"><Icon name="refresh" className="size-[13px]" /></IconButton>
        <IconButton label="Up" className="w-5"><ArrowUp className="size-2.5 text-neutral-400" /></IconButton>
      </div>
      <ul className="h-[83px] pl-[7px] pt-[5px]">
        {nodes.map(([label, n], i) => (
          <li key={label} className="flex h-4 items-center">
            <ChevronRight className="size-2.5 text-neutral-500" />
            <span className={`ml-[2px] flex h-4 items-center gap-1 pl-px pr-[3px] ${i === 0 ? "bg-[#c5e2fa]" : ""}`}><Icon name={n} className="size-[13px]" />{label}</span>
          </li>
        ))}
      </ul>
      <div className="ml-[3px] h-1 border-y border-[#5c5c80] bg-[#b6b6cc]" />
      <p className="h-[14px] pl-[10px] pt-px leading-[14px]">Default Appearance: color</p>
      <div className="ml-1.5 mr-[2px] h-[30px] overflow-hidden whitespace-nowrap border border-[#444] bg-[#fdfd79] pl-px pt-0.5">Drag and drop appearances onto the mo...</div>
      <div className="ml-[3px] mt-[3px] flex h-1 items-center justify-center gap-1 bg-[#a9a9c0]">
        <i className="size-0.5 bg-black" /><i className="size-0.5 bg-black" /><i className="size-0.5 bg-black" />
      </div>
      <div className="flex flex-col items-start pl-[21px] pt-[2px]">
        <button type="button" className="flex flex-col items-center gap-[3px]"><ColorSwatch /><span className="h-3 leading-3">color</span></button>
        <button type="button" className="mt-5 flex flex-col items-center gap-[3px]"><TextureSwatch /><span className="h-3 leading-3">texture</span></button>
      </div>
    </aside>
  );
}

const steps = [["First", "M2 1v6M7 1L3 4l4 3z"], ["Previous", "M6 1L2 4l4 3z"], ["Next", "M2 1l4 3-4 3z"], ["Last", "M6.500 1v6M1 1l4 3-4 3z"]];

function SheetTabs() {
  return (
    <div className="flex h-[14px] shrink-0 border-y border-[#8d8d8d] bg-[#f7f7f7] text-[11px] leading-3">
      <div className="flex w-[55px] bg-[#a6a6bd]">
        {steps.map(([label, d]) => (
          <IconButton key={label} label={label} className="flex-1 border-r border-[#7d7d97]"><svg viewBox="0 0 8 8" className="size-2" aria-hidden="true"><path d={d} fill="#8080a0" stroke="#7a7a9b" /></svg></IconButton>
        ))}
      </div>
      <button type="button" className="w-[51px] pl-0.5 font-bold text-black">Model</button>
      <button type="button" className="w-[59px] border-x border-[#a5a5a5] bg-[#d4d4d4]">3D Views</button>
      <button type="button" className="w-[96px] border-r border-[#a5a5a5] bg-[#d4d4d4] pr-1">Motion Study 1</button>
    </div>
  );
}

export default function App() {
  return (
    <div className="flex min-h-screen flex-col bg-black py-5 font-['Lato','Open_Sans',sans-serif] text-[10px] leading-3 text-[#1f2933]">
      <div className="flex flex-1 flex-col bg-[#f7f7f7]">
        <TitleBar />
        <DisplayState />
        <Ribbon />
        <div className="flex flex-1">
          <main className="flex min-w-0 flex-1 flex-col">
            <div className="flex flex-1 flex-col bg-[linear-gradient(to_bottom,transparent_50%,#fdfdfe_68%,#fdfdfe_88%,#f8f8fa),radial-gradient(ellipse_30%_20%_at_18%_50%,#e4e7f2,transparent),linear-gradient(98deg,#fefefe_50%,#eff0f6_66%,#dee1ec_80%,#e4e7ef)]">
              <div className="flex">
                <CommandTabs />
                <ViewToolbar />
                <DocumentControls />
              </div>
              <div className="flex flex-1">
                <FeatureTree />
                <Viewport />
              </div>
            </div>
            <SheetTabs />
          </main>
          <TaskPane />
        </div>
        <footer className="flex h-[14px] shrink-0 items-center overflow-hidden whitespace-nowrap pl-px">
          <span className="flex-1">Changes the current view orientation or number of viewports.</span>
          <span className="w-[70px]">Editing Part</span>
          <span className="w-[64px]"><Icon name="edit" className="size-2.5" /></span>
          <span className="w-[46px]">MMGS</span>
          <span className="w-[21px]"><Caret className="rotate-180" /></span>
          <span className="w-[14px]"><Icon name="tag" className="size-3" /></span>
        </footer>
      </div>
    </div>
  );
}
